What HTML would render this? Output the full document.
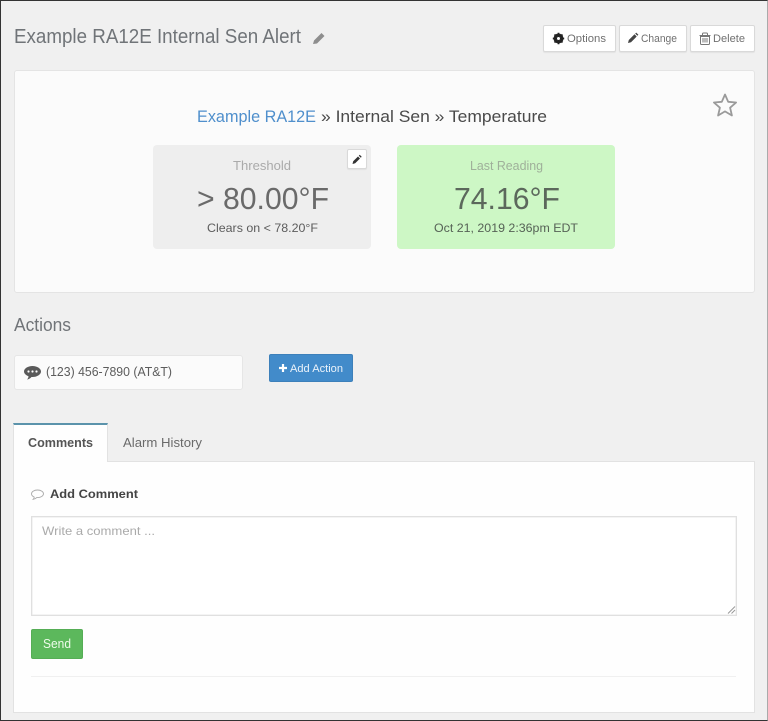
<!DOCTYPE html>
<html lang="en">
<head>
<meta charset="utf-8">
<title>Example RA12E Internal Sen Alert</title>
<style>
html,body{margin:0;padding:0}
body{width:768px;height:721px;overflow:hidden;background:#f0f0f0;position:relative;font-family:"Liberation Sans",sans-serif}
.b{position:absolute;box-sizing:border-box}
.frame{left:0;top:0;width:768px;height:721px;border:1px solid #333;border-right-color:#aaa}
.btn{background:#fff;border:1px solid #d9d9d9;border-radius:2px;box-shadow:0 1px 1px rgba(0,0,0,.06)}
svg.o{position:absolute;left:0;top:0}
text{font-family:"Liberation Sans",sans-serif}
</style>
</head>
<body>
<div class="b frame"></div>
<div class="b btn" style="left:543px;top:25px;width:73px;height:27px"></div>
<div class="b btn" style="left:619px;top:25px;width:68px;height:27px"></div>
<div class="b btn" style="left:690px;top:25px;width:65px;height:27px"></div>

<div class="b" style="left:14px;top:70px;width:741px;height:223px;background:#fbfbfb;border:1px solid #e4e4e4;border-radius:3px"></div>
<div class="b" style="left:153px;top:145px;width:218px;height:104px;background:#eeeeee;border-radius:4px"></div>
<div class="b" style="left:397px;top:145px;width:218px;height:104px;background:#cdf7c5;border-radius:4px"></div>
<div class="b btn" style="left:347px;top:149px;width:20px;height:20px"></div>

<div class="b" style="left:14px;top:355px;width:229px;height:35px;background:#fbfbfb;border:1px solid #e6e6e6;border-radius:3px"></div>
<div class="b" style="left:269px;top:354px;width:84px;height:28px;background:#428bca;border:1px solid #3d80ba;border-radius:2px"></div>

<div class="b" style="left:13px;top:461px;width:742px;height:252px;background:#fefefe;border:1px solid #e2e2e2"></div>
<div class="b" style="left:13px;top:423px;width:95px;height:39px;background:#fefefe;border:1px solid #e2e2e2;border-top:2px solid #5b93ab;border-bottom:0"></div>
<div class="b" style="left:31px;top:516px;width:706px;height:100px;background:#fff;border:1px solid #e0e0e0;box-shadow:inset 0 0 0 .5px #e8e8e8"></div>
<div class="b" style="left:31px;top:629px;width:52px;height:30px;background:#5cb85c;border:1px solid #55ad55;border-radius:2px"></div>
<div class="b" style="left:31px;top:676px;width:705px;height:1px;background:#f0f0f0"></div>

<svg class="o" width="768" height="721" viewBox="0 0 768 721" xmlns="http://www.w3.org/2000/svg">
  <text x="14" y="43" font-size="20" fill="#707478" textLength="287" lengthAdjust="spacingAndGlyphs">Example RA12E Internal Sen Alert</text>
  <path d="M313 44l1-3.500 7.500-7.500 3 3-7.500 7.500z" fill="#8e8e8e"/>

  <!-- gear -->
  <circle cx="558.500" cy="38.500" r="3.800" fill="none" stroke="#222" stroke-width="2.400"/>
  <path d="M558.500 32.800v11.400M552.800 38.500h11.400M554.500 34.500l8 8M562.500 34.500l-8 8" stroke="#222" stroke-width="1.800"/>
  <circle cx="558.500" cy="38.500" r="1.500" fill="#fff"/>
  <text x="567" y="42" font-size="11" fill="#707070" textLength="39" lengthAdjust="spacingAndGlyphs">Options</text>
  <!-- pencil -->
  <path d="M628 43l.8-3 5.700-5.700 2.200 2.200-5.700 5.700z M635.200 33.600l1-1 2.200 2.200-1 1z" fill="#444"/>
  <text x="641" y="42" font-size="11" fill="#707070" textLength="36" lengthAdjust="spacingAndGlyphs">Change</text>
  <!-- trash -->
  <path d="M700.500 36.500h9v7a1 1 0 0 1-1 1h-7a1 1 0 0 1-1-1zM699.500 35.500h11M702.500 35.500v-1.500a1 1 0 0 1 1-1h3a1 1 0 0 1 1 1v1.500M703 38v4.500M705 38v4.500M707 38v4.500" fill="none" stroke="#777" stroke-width="1"/>
  <text x="713" y="42" font-size="11" fill="#707070" textLength="32" lengthAdjust="spacingAndGlyphs">Delete</text>

  <text x="197" y="122" font-size="17" fill="#4f8fcc" textLength="119" lengthAdjust="spacingAndGlyphs">Example RA12E</text>
  <text x="321" y="122" font-size="17" fill="#4a4a4a" textLength="226" lengthAdjust="spacingAndGlyphs">» Internal Sen » Temperature</text>
  <path d="M725 94.500l3.200 7.300 7.900.7-6 5.200 1.800 7.800-6.900-4.100-6.900 4.100 1.800-7.800-6-5.200 7.900-.7z" fill="none" stroke="#9a9a9a" stroke-width="1.800" stroke-linejoin="round"/>

  <path d="M352.500 164l.7-2.700 4.800-4.800 2 2-4.800 4.800zM358.800 155.700l.9-.9 2 2-.9.900z" fill="#333"/>
  <text x="233" y="170" font-size="13" fill="#aaa" textLength="58" lengthAdjust="spacingAndGlyphs">Threshold</text>
  <text x="197" y="209" font-size="31" fill="#6a6a6a" textLength="132" lengthAdjust="spacingAndGlyphs">&gt; 80.00°F</text>
  <text x="207" y="232" font-size="12" fill="#5c5c5c" textLength="111" lengthAdjust="spacingAndGlyphs">Clears on &lt; 78.20°F</text>

  <text x="470" y="170" font-size="13" fill="#9fb09a" textLength="73" lengthAdjust="spacingAndGlyphs">Last Reading</text>
  <text x="454" y="209" font-size="31" fill="#5c685c" textLength="106" lengthAdjust="spacingAndGlyphs">74.16°F</text>
  <text x="434" y="232" font-size="12" fill="#566256" textLength="144" lengthAdjust="spacingAndGlyphs">Oct 21, 2019 2:36pm EDT</text>

  <text x="14" y="331" font-size="18" fill="#707478" textLength="57" lengthAdjust="spacingAndGlyphs">Actions</text>
  <path d="M32.500 366c4.700 0 8.500 2.500 8.500 5.500s-3.800 5.500-8.500 5.500h-1c-1 1.300-2.700 2.300-4.500 2.500 1-1 1.500-2 1.500-3.200-2.500-1-4.500-2.700-4.500-4.800 0-3 3.800-5.500 8.500-5.500z" fill="#5a5a5a"/>
  <circle cx="28.500" cy="371.500" r="1.100" fill="#fff"/><circle cx="32.500" cy="371.500" r="1.100" fill="#fff"/><circle cx="36.500" cy="371.500" r="1.100" fill="#fff"/>
  <text x="46" y="376" font-size="12.500" fill="#5c5c5c" textLength="126" lengthAdjust="spacingAndGlyphs">(123) 456-7890 (AT&amp;T)</text>

  <path d="M279 368h8M283 364v8" stroke="#fff" stroke-width="2.200"/>
  <text x="290" y="372" font-size="11" fill="#eaf2fa" textLength="53" lengthAdjust="spacingAndGlyphs">Add Action</text>

  <text x="28" y="447" font-size="12.500" font-weight="bold" fill="#555" textLength="65" lengthAdjust="spacingAndGlyphs">Comments</text>
  <text x="123" y="447" font-size="12.500" fill="#6a6a6a" textLength="79" lengthAdjust="spacingAndGlyphs">Alarm History</text>

  <path d="M37.500 490c3.300 0 6 1.700 6 3.800s-2.700 3.800-6 3.800h-.8c-.8.900-2 1.500-3.500 1.700.7-.7 1-1.400 1-2.200-1.600-.7-2.700-1.900-2.700-3.300 0-2.100 2.700-3.800 6-3.800z" fill="none" stroke="#aaa" stroke-width=".9"/>
  <text x="50" y="498" font-size="12" font-weight="bold" fill="#444" textLength="88" lengthAdjust="spacingAndGlyphs">Add Comment</text>

  <text x="42" y="535" font-size="12" fill="#aaa" textLength="113" lengthAdjust="spacingAndGlyphs">Write a comment ...</text>
  <path d="M728 613.500l7-7M731.500 613.500l3.500-3.500" stroke="#999" stroke-width="1"/>

  <text x="43" y="648" font-size="13" fill="#eefbea" textLength="28" lengthAdjust="spacingAndGlyphs">Send</text>
</svg>
</body>
</html>
